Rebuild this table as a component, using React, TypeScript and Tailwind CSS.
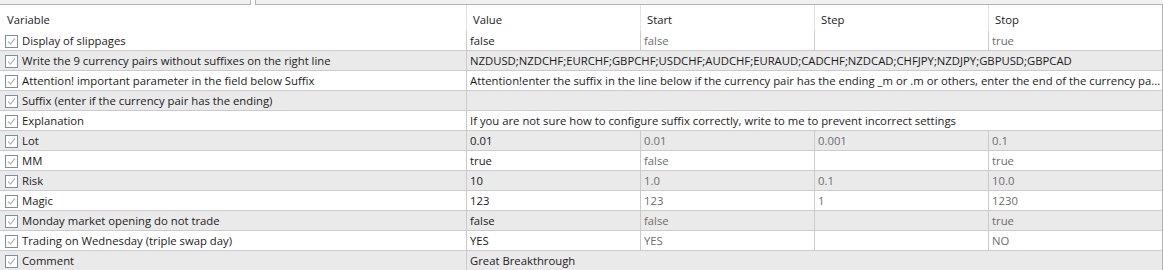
type Row = {
  name: string;
  value: string;
  start?: string;
  step?: string;
  stop?: string;
  span?: boolean;
};

const rows: Row[] = [
  { name: "Display of slippages", value: "false", start: "false", step: "", stop: "true" },
  {
    name: "Write the 9 currency pairs without suffixes on the right line",
    value: "NZDUSD;NZDCHF;EURCHF;GBPCHF;USDCHF;AUDCHF;EURAUD;CADCHF;NZDCAD;CHFJPY;NZDJPY;GBPUSD;GBPCAD",
    span: true,
  },
  {
    name: "Attention! important parameter in the field below Suffix",
    value:
      "Attention!enter the suffix in the line below if the currency pair has the ending _m or .m or others, enter the end of the currency pa...",
    span: true,
  },
  { name: "Suffix (enter if the currency pair has the ending)", value: "", span: true },
  {
    name: "Explanation",
    value: "If you are not sure how to configure suffix correctly, write to me to prevent incorrect settings",
    span: true,
  },
  { name: "Lot", value: "0.01", start: "0.01", step: "0.001", stop: "0.1" },
  { name: "MM", value: "true", start: "false", step: "", stop: "true" },
  { name: "Risk", value: "10", start: "1.0", step: "0.1", stop: "10.0" },
  { name: "Magic", value: "123", start: "123", step: "1", stop: "1230" },
  { name: "Monday market opening do not trade", value: "false", start: "false", step: "", stop: "true" },
  { name: "Trading on Wednesday (triple swap day)", value: "YES", start: "YES", step: "", stop: "NO" },
  { name: "Comment", value: "Great Breakthrough", span: true },
];

function Check() {
  return (
    <div className="mr-[4px] flex h-[13px] w-[13px] shrink-0 items-center justify-center border border-[#7b8fa8] bg-white">
      <svg width="9" height="9" viewBox="0 0 9 9" fill="none">
        <path d="M1 4.5 L3.5 7 L8 1.5" stroke="#b9b9b9" strokeWidth="1.2" />
      </svg>
    </div>
  );
}

export default function App() {
  return (
    <div
      className="h-[270px] w-[1163px] overflow-hidden bg-white text-[11.3px] text-[#1b1b1b]"
      style={{ fontFamily: '"Open Sans", "Noto Sans", sans-serif' }}
    >
      <div className="flex h-[5px]">
        <div className="w-[251px] border-r border-b border-[#b4b4b4] bg-[#f0f0f0]" />
        <div className="w-[4px]" />
        <div className="flex-1 border-l border-b border-[#b4b4b4] bg-[#f0f0f0]" />
      </div>

      <div className="border-r border-[#b0b0b0]">
        <div className="grid h-[26px] grid-cols-[466px_174px_174px_174px_174px] items-center">
          <div className="flex h-full items-center pl-[7px] pt-[4px]">Variable</div>
          <div className="flex h-full items-center border-l border-[#e3e3e3] pl-[6px] pt-[4px]">Value</div>
          <div className="flex h-full items-center border-l border-[#e3e3e3] pl-[6px] pt-[4px]">Start</div>
          <div className="flex h-full items-center border-l border-[#e3e3e3] pl-[6px] pt-[4px]">Step</div>
          <div className="flex h-full items-center border-l border-[#e3e3e3] pl-[6px] pt-[4px]">Stop</div>
        </div>

        {rows.map((r, i) => (
          <div
            key={r.name}
            className={`grid h-[20px] grid-cols-[466px_174px_174px_174px_174px] border-b border-[#cbcbcb] ${
              i % 2 === 0 ? "bg-white" : "bg-[#eaeaea]"
            }`}
          >
            <div className="flex items-center pl-[5px] pt-[1px]">
              <Check />
              <span className="whitespace-nowrap">{r.name}</span>
            </div>
            {r.span ? (
              <div className="col-span-4 flex items-center overflow-hidden whitespace-nowrap border-l border-[#cbcbcb] pl-[3px] pt-[1px]">
                <span className="truncate">{r.value}</span>
              </div>
            ) : (
              <>
                <div className="flex items-center border-l border-[#cbcbcb] pl-[3px] pt-[1px]">{r.value}</div>
                <div className="flex items-center border-l border-[#cbcbcb] pl-[3px] pt-[1px] text-[#6e6e6e]">{r.start}</div>
                <div className="flex items-center border-l border-[#cbcbcb] pl-[3px] pt-[1px] text-[#6e6e6e]">{r.step}</div>
                <div className="flex items-center border-l border-[#cbcbcb] pl-[3px] pt-[1px] text-[#6e6e6e]">{r.stop}</div>
              </>
            )}
          </div>
        ))}
      </div>
    </div>
  );
}
